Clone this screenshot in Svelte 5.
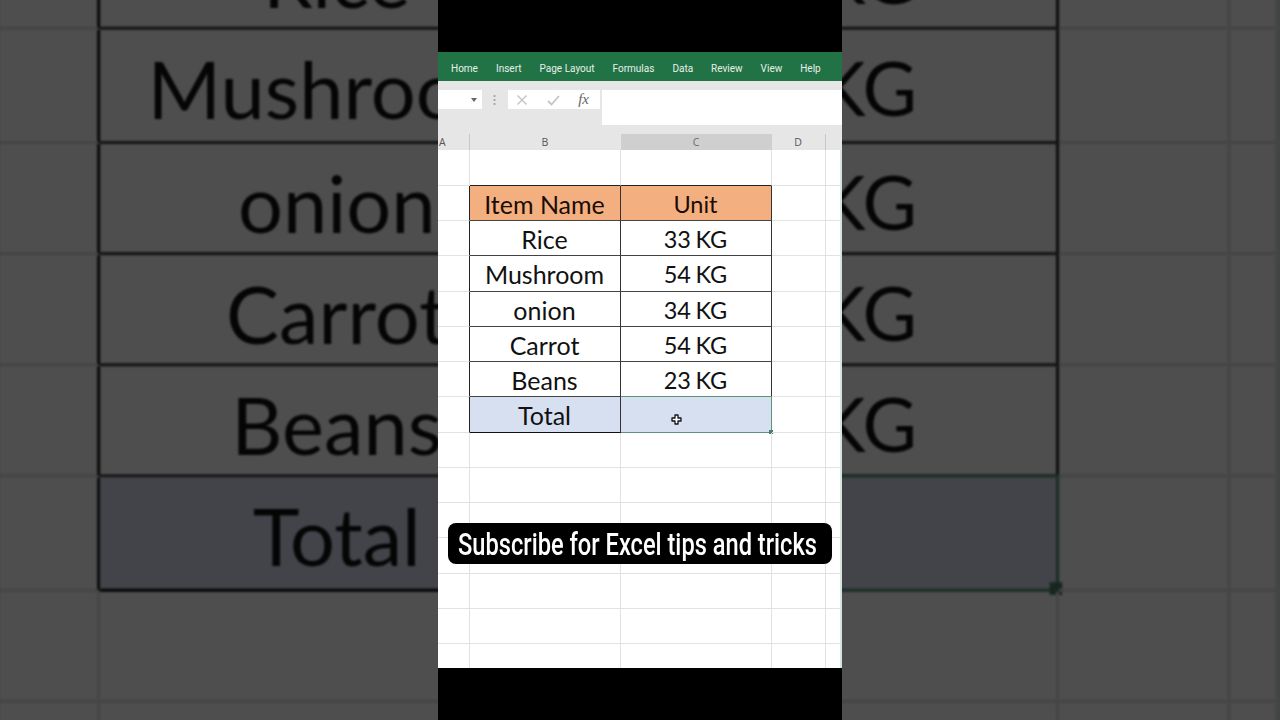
<script lang="ts">
  // Shorts-style frame: the sheet in a 404px column, with the same sheet
  // blown up and dimmed behind it.
  const tabs = ['Home', 'Insert', 'Page Layout', 'Formulas', 'Data', 'Review', 'View', 'Help'];

  type Row = { b?: string; c?: string; kind?: 'head' | 'body' | 'total' };

  const rows: Row[] = [
    {},
    { b: 'Item Name', c: 'Unit', kind: 'head' },
    { b: 'Rice', c: '33 KG', kind: 'body' },
    { b: 'Mushroom', c: '54 KG', kind: 'body' },
    { b: 'onion', c: '34 KG', kind: 'body' },
    { b: 'Carrot', c: '54 KG', kind: 'body' },
    { b: 'Beans', c: '23 KG', kind: 'body' },
    { b: 'Total', c: '', kind: 'total' },
    {}, {}, {}, {}, {}, {}, {}
  ];
</script>

{#snippet excel()}
  <div class="ribbon">
    {#each tabs as tab}
      <span>{tab}</span>
    {/each}
  </div>

  <div class="formula">
    <div class="namebox">
      <svg width="6" height="4" viewBox="0 0 6 4"><path d="M0 0h6L3 4z" fill="#666" /></svg>
    </div>
    <svg class="grip" width="3" height="10" viewBox="0 0 3 10">
      <path d="M0.5 0h2v2h-2zM0.5 4h2v2h-2zM0.5 8h2v2h-2z" fill="#a9a9a9" />
    </svg>
    <div class="fxbox">
      <svg width="12" height="12" viewBox="0 0 12 12">
        <path d="M1.5 1.5l9 9M10.5 1.5l-9 9" stroke="#c4c4c4" stroke-width="1.4" fill="none" />
      </svg>
      <svg width="13" height="12" viewBox="0 0 13 12">
        <path d="M1 7l3.5 3.5L12 2" stroke="#c4c4c4" stroke-width="1.8" fill="none" />
      </svg>
      <span class="fx">fx</span>
    </div>
    <div class="input"></div>
  </div>

  <div class="heads">
    <div class="hd a">A</div>
    <div class="hd">B</div>
    <div class="hd on">C</div>
    <div class="hd d">D</div>
    <div class="hd last"></div>
  </div>

  <div class="sheet">
    {#each rows as row, i}
      <div class="cell a" class:edge={row.kind}></div>
      <div
        class="cell b {row.kind ?? ''}"
        class:above={rows[i + 1]?.kind === 'head'}
      >{row.b ?? ''}</div>
      <div
        class="cell c {row.kind ?? ''}"
        class:above={rows[i + 1]?.kind === 'head'}
      >
        {row.c ?? ''}
        {#if row.kind === 'total'}
          <svg class="cursor" width="11" height="11" viewBox="0 0 11 11">
            <path d="M4 1h3v3h3v3H7v3H4V7H1V4h3z" fill="#fff" stroke="#111" stroke-width="1.3" stroke-linejoin="round" />
          </svg>
          <i class="handle"></i>
        {/if}
      </div>
      <div class="cell d"></div>
      <div class="cell e"></div>
    {/each}
  </div>
{/snippet}

<main class="stage">
  <div class="backdrop" aria-hidden="true">
    <div class="frame">{@render excel()}</div>
  </div>

  <div class="frame front">
    {@render excel()}
    <div class="caption"><span>Subscribe for Excel tips and tricks</span></div>
  </div>
</main>

<style>
  :global(body) {
    margin: 0;
    background: #000;
  }

  .stage {
    position: relative;
    width: 1280px;
    height: 720px;
    overflow: hidden;
    display: flex;
    justify-content: center;
    background: #4e4e4e;
  }

  .backdrop {
    position: absolute;
    inset: 0;
    display: flex;
    justify-content: center;
    transform: scale(3.175);
    transform-origin: 640px 360px;
    filter: brightness(0.305) blur(0.35px);
  }

  .frame {
    position: relative;
    flex: none;
    box-sizing: border-box;
    width: 404px;
    height: 720px;
    padding: 52px 0;
    display: flex;
    flex-direction: column;
    overflow: hidden;
    background: #000;
    font-family: 'Open Sans', 'Liberation Sans', sans-serif;
  }

  .ribbon {
    flex: none;
    height: 29px;
    box-sizing: border-box;
    padding: 3px 0 0 13px;
    display: flex;
    align-items: center;
    gap: 18px;
    background: #217346;
    color: #e6efe9;
    font-family: Roboto, 'Liberation Sans', sans-serif;
    font-size: 10px;
    white-space: nowrap;
  }

  .formula {
    flex: none;
    height: 53px;
    display: flex;
    align-items: flex-start;
    background: #e6e6e6;
  }

  .namebox {
    width: 44px;
    height: 19px;
    margin-top: 9px;
    box-sizing: border-box;
    padding-right: 5px;
    display: flex;
    align-items: center;
    justify-content: flex-end;
    background: #fff;
  }

  .grip {
    margin: 14px 12px 0 11px;
    flex: none;
  }

  .fxbox {
    width: 92px;
    height: 19px;
    margin-top: 9px;
    box-sizing: border-box;
    padding: 0 11px 0 8px;
    display: flex;
    align-items: center;
    justify-content: space-between;
    background: #fff;
  }

  .fx {
    font-family: 'Liberation Serif', serif;
    font-style: italic;
    font-size: 15px;
    color: #666;
  }

  .input {
    flex: 1;
    height: 35px;
    margin: 9px 0 0 2px;
    background: #fff;
  }

  .heads {
    flex: none;
    height: 16px;
    display: grid;
    grid-template-columns: 31.5px 151px 151px 54px 1fr;
    background: #e6e6e6;
    color: #555;
    font-size: 10.5px;
    line-height: 16px;
    text-align: center;
  }

  .hd {
    box-sizing: border-box;
    border-bottom: 1px solid #a0a0a0;
  }

  .hd.a {
    text-align: left;
    padding-left: 1px;
    border-right: 1px solid #c8c8c8;
  }

  .hd.on {
    background: #cfcfcf;
    color: #6a6a6a;
    border-bottom: 2px solid #2a6e4c;
  }

  .hd.d {
    border-right: 1px solid #c8c8c8;
  }

  .sheet {
    flex: 1;
    display: grid;
    grid-template-columns: 31.5px 151px 151px 54px 1fr;
    grid-template-rows: 35.75px;
    grid-auto-rows: 35.25px;
    background: #fff;
    overflow: hidden;
    font-family: Lato, 'Liberation Sans', sans-serif;
    font-size: 25px;
    color: #111;
    border-right: 1px solid #cfe8d4;
  }

  .cell {
    position: relative;
    box-sizing: border-box;
    display: flex;
    align-items: center;
    justify-content: center;
    padding-top: 2px;
    border-right: 1px solid #e2e2e2;
    border-bottom: 1px solid #e2e2e2;
    white-space: nowrap;
  }

  .cell.c {
    font-size: 23.5px;
    word-spacing: -1.5px;
  }

  .cell.a.edge {
    border-right: 1px solid #222;
  }

  .cell.above {
    border-bottom-color: #222;
  }

  .cell.head,
  .cell.body,
  .cell.total {
    border-right-color: #333;
    border-bottom-color: #444;
  }

  .cell.head {
    background: #f4af80;
    color: #1a0d06;
  }

  .cell.total {
    background: #d7e0f1;
  }

  .cell.b.total {
    border-bottom-color: #111;
  }

  .cell.c.total {
    border-right-color: #5f9379;
    border-bottom-color: #5f9379;
    box-shadow: 0 -1px 0 #5f9379;
  }

  .cursor {
    position: absolute;
    left: 50px;
    top: 17px;
  }

  .handle {
    position: absolute;
    right: -2px;
    bottom: -2px;
    width: 4px;
    height: 4px;
    background: #4a7f65;
  }

  .caption {
    position: absolute;
    left: 10px;
    top: 523px;
    width: 384px;
    height: 41px;
    display: flex;
    align-items: center;
    border-radius: 8px;
    background: #000;
    color: #fff;
    font-family: Roboto, 'Liberation Sans', sans-serif;
    font-size: 31px;
    font-weight: 500;
    white-space: nowrap;
  }

  .caption span {
    margin: 2px 0 0 10px;
    transform: scaleX(0.763);
    transform-origin: left center;
  }
</style>
